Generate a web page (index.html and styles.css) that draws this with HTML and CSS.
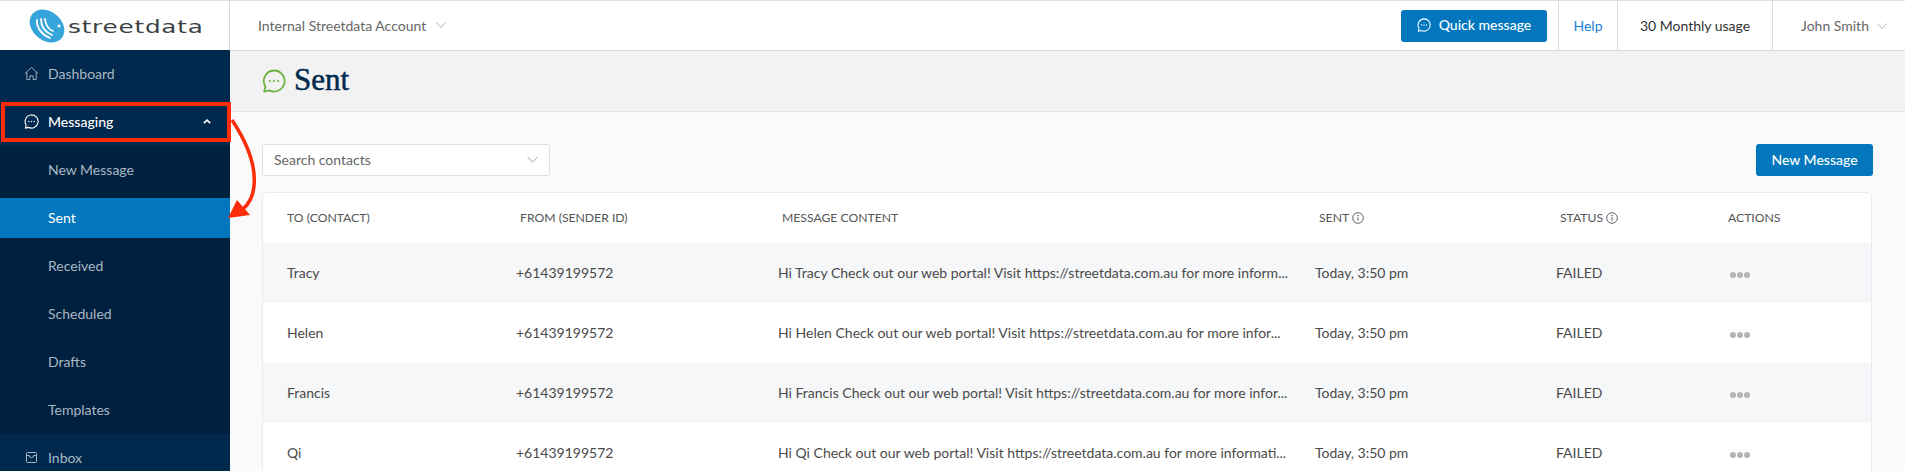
FILE: index.html
```html
<!DOCTYPE html>
<html lang="en">
<head>
    <meta charset="UTF-8">
    <meta name="viewport" content="width=device-width, initial-scale=1.0">
    <title>Sent - Streetdata</title>
    <link rel="stylesheet" href="styles.css">
</head>
<body>
    <svg class="sprites" width="0" height="0">
        <symbol id="chat" viewBox="0 0 24 24">
            <path d="M12 1.500a10.500 10.500 0 1 1-4.600 19.900L2.200 22.600l1.300-4.900A10.500 10.500 0 0 1 12 1.500z" fill="none" stroke="currentColor" stroke-width="1.800" stroke-linejoin="round"/>
            <circle cx="7.800" cy="12" r="1.100" fill="currentColor"/>
            <circle cx="12" cy="12" r="1.100" fill="currentColor"/>
            <circle cx="16.200" cy="12" r="1.100" fill="currentColor"/>
        </symbol>
        <symbol id="chevron" viewBox="0 0 10 6">
            <path d="M.5.5 5 5.500 9.500.5" fill="none" stroke="currentColor" stroke-width=".9"/>
        </symbol>
        <symbol id="info" viewBox="0 0 12 12">
            <circle cx="6" cy="6" r="5.300" fill="none" stroke="currentColor" stroke-width=".9"/>
            <path d="M6 5.300v3.400" stroke="currentColor" stroke-width="1"/>
            <circle cx="6" cy="3.500" r=".7" fill="currentColor"/>
        </symbol>
    </svg>

    <div class="app">
        <header class="topbar">
            <div class="logo">
                <svg class="logo-mark" width="36" height="36" viewBox="0 0 36 36">
                    <ellipse cx="18" cy="18" rx="19" ry="14.500" transform="rotate(40 18 18)" fill="#36a5dc"/>
                    <g fill="none" stroke="#fff" stroke-width="1.800" stroke-linecap="round">
                        <path d="M8 12c-.5 8 5 15 13 18"/>
                        <path d="M12 11c0 7 4 13 11 16"/>
                        <path d="M16 11c.5 5 3 10 8 12"/>
                    </g>
                    <circle cx="30" cy="18" r="1.500" fill="#fff"/>
                </svg>
                <span class="logo-text">streetdata</span>
            </div>
            <div class="account">
                Internal Streetdata Account
                <svg class="chevron" width="10" height="6"><use href="#chevron"/></svg>
            </div>
            <a class="btn quick-btn" href="#">
                <svg width="14" height="14"><use href="#chat"/></svg>
                Quick message
            </a>
            <a class="topbar-cell help" href="#">Help</a>
            <div class="topbar-cell usage">30 Monthly usage</div>
            <div class="topbar-cell user">
                John Smith
                <svg class="chevron" width="10" height="6"><use href="#chevron"/></svg>
            </div>
        </header>

        <div class="body-wrap">
            <nav class="sidebar">
                <a class="nav-item" href="#">
                    <span class="nav-icon">
                        <svg width="15" height="15" viewBox="0 0 16 16">
                            <path d="M1 8 8 1.500 15 8M3 6.500V14.500H6.300V10.500H9.700V14.500H13V6.500" fill="none" stroke="currentColor" stroke-width="1"/>
                        </svg>
                    </span>
                    Dashboard
                </a>
                <a class="nav-item nav-open" href="#">
                    <span class="nav-icon">
                        <svg width="15" height="15"><use href="#chat"/></svg>
                    </span>
                    Messaging
                    <svg class="nav-caret" width="8" height="5" viewBox="0 0 8 5">
                        <path d="M.8 4.200 4 1.200l3.200 3" fill="none" stroke="currentColor" stroke-width="1.600"/>
                    </svg>
                </a>
                <div class="subnav">
                    <a class="sub-item" href="#">New Message</a>
                    <a class="sub-item active" href="#">Sent</a>
                    <a class="sub-item" href="#">Received</a>
                    <a class="sub-item" href="#">Scheduled</a>
                    <a class="sub-item" href="#">Drafts</a>
                    <a class="sub-item" href="#">Templates</a>
                </div>
                <a class="nav-item" href="#">
                    <span class="nav-icon">
                        <svg width="11" height="11" viewBox="0 0 11 11">
                            <path d="M1.500.5h8a1 1 0 0 1 1 1v8a1 1 0 0 1-1 1h-8a1 1 0 0 1-1-1v-8a1 1 0 0 1 1-1zM.5 3.500h2.800a2.200 2.200 0 0 0 4.400 0h2.800" fill="none" stroke="currentColor" stroke-width="1"/>
                        </svg>
                    </span>
                    Inbox
                </a>
            </nav>

            <main class="main">
                <div class="page-title">
                    <svg class="title-icon" width="24" height="24"><use href="#chat"/></svg>
                    <h1>Sent</h1>
                </div>
                <div class="content">
                    <div class="toolbar">
                        <div class="search-select">
                            Search contacts
                            <svg class="chevron" width="11" height="7"><use href="#chevron"/></svg>
                        </div>
                        <a class="btn new-btn" href="#">New Message</a>
                    </div>
                    <div class="table-card">
                        <table class="msg-table">
                            <colgroup>
                                <col class="col-to">
                                <col class="col-from">
                                <col class="col-msg">
                                <col class="col-sent">
                                <col class="col-status">
                                <col>
                            </colgroup>
                            <thead>
                                <tr>
                                    <th>To (contact)</th>
                                    <th class="nudge">From (sender ID)</th>
                                    <th class="nudge">Message content</th>
                                    <th class="nudge">Sent <svg class="info" width="12" height="12"><use href="#info"/></svg></th>
                                    <th class="nudge">Status <svg class="info" width="12" height="12"><use href="#info"/></svg></th>
                                    <th>Actions</th>
                                </tr>
                            </thead>
                            <tbody>
                                <tr>
                                    <td>Tracy</td>
                                    <td>+61439199572</td>
                                    <td class="msg">Hi Tracy Check out our web portal! Visit https://streetdata.com.au for more inform...</td>
                                    <td>Today, 3:50 pm</td>
                                    <td>FAILED</td>
                                    <td><span class="dots"><i></i><i></i><i></i></span></td>
                                </tr>
                                <tr>
                                    <td>Helen</td>
                                    <td>+61439199572</td>
                                    <td class="msg">Hi Helen Check out our web portal! Visit https://streetdata.com.au for more infor...</td>
                                    <td>Today, 3:50 pm</td>
                                    <td>FAILED</td>
                                    <td><span class="dots"><i></i><i></i><i></i></span></td>
                                </tr>
                                <tr>
                                    <td>Francis</td>
                                    <td>+61439199572</td>
                                    <td class="msg">Hi Francis Check out our web portal! Visit https://streetdata.com.au for more infor...</td>
                                    <td>Today, 3:50 pm</td>
                                    <td>FAILED</td>
                                    <td><span class="dots"><i></i><i></i><i></i></span></td>
                                </tr>
                                <tr>
                                    <td>Qi</td>
                                    <td>+61439199572</td>
                                    <td class="msg">Hi Qi Check out our web portal! Visit https://streetdata.com.au for more informati...</td>
                                    <td>Today, 3:50 pm</td>
                                    <td>FAILED</td>
                                    <td><span class="dots"><i></i><i></i><i></i></span></td>
                                </tr>
                            </tbody>
                        </table>
                    </div>
                </div>
            </main>
        </div>
    </div>

    <!-- Red callout drawn on top of the screenshot -->
    <div class="callout-box"></div>
    <svg class="callout-arrow" width="60" height="130" viewBox="0 0 60 130">
        <path d="M4 12C20 36 28 58 26 78 25 88 21 96 15 101" fill="none" stroke="#fb2c07" stroke-width="3.500"/>
        <path d="M0 110 9 92 22 107z" fill="#fb2c07"/>
    </svg>
</body>
</html>
```

FILE: styles.css
```css
/* General Styles */
html, body {
    margin: 0;
    padding: 0;
    height: 100%;
    overflow: hidden;
}

body {
    font-family: Lato, "Open Sans", sans-serif;
    font-size: 14px;
    color: #4a4a4a;
    background: #fafafa;
}

a {
    text-decoration: none;
    color: inherit;
}

.sprites {
    display: block;
    height: 0;
}

.app {
    display: flex;
    flex-direction: column;
    height: 100%;
}

/* Top Bar */
.topbar {
    display: flex;
    align-items: stretch;
    flex: 0 0 auto;
    box-sizing: border-box;
    height: 51px;
    background: #fff;
    border-top: 1px solid #dfdfdf;
    border-bottom: 1px solid #d9d9d9;
}

.logo {
    display: flex;
    align-items: center;
    box-sizing: border-box;
    width: 230px;
    padding-left: 29px;
    border-right: 1px solid #d9d9d9;
}

.logo-mark {
    flex: 0 0 auto;
}

.logo-text {
    display: inline-block;
    margin-left: 3px;
    margin-top: 3px;
    font-family: "DejaVu Sans", sans-serif;
    font-size: 17px;
    letter-spacing: .55px;
    color: #3c3f44;
    transform: scaleX(1.45);
    transform-origin: left center;
}

.account {
    display: flex;
    align-items: center;
    flex: 1;
    padding-left: 28px;
    padding-bottom: 1px;
    color: #666;
}

.chevron {
    color: #a8a8a8;
}

.account .chevron {
    margin-left: 10px;
}

.btn {
    display: flex;
    align-items: center;
    justify-content: center;
    box-sizing: border-box;
    padding-bottom: 2px;
    color: #fff;
    background: #0277bd;
    border-radius: 3px;
    font-weight: 500;
}

.quick-btn {
    align-self: center;
    gap: 8px;
    width: 146px;
    height: 32px;
    margin-right: 11px;
}

.topbar-cell {
    display: flex;
    align-items: center;
    border-left: 1px solid #d9d9d9;
}

.help {
    width: 58px;
    justify-content: center;
    color: #1a7fd4;
}

.usage {
    width: 154px;
    justify-content: center;
    color: #333;
}

.user {
    width: 133px;
    padding-left: 28px;
    box-sizing: border-box;
    color: #666;
}

.user .chevron {
    margin-left: 8px;
}

.body-wrap {
    display: flex;
    flex: 1;
    min-height: 0;
}

/* Sidebar */
.sidebar {
    flex: 0 0 230px;
    margin-top: -1px;
    background: #00294d;
}

.nav-item {
    display: flex;
    align-items: center;
    box-sizing: border-box;
    height: 48px;
    padding: 0 0 2px 24px;
    color: #a9b7c4;
}

.nav-icon {
    display: flex;
    justify-content: center;
    flex: 0 0 15px;
    margin-right: 9px;
}

.nav-open {
    color: #fff;
    font-weight: 500;
}

.nav-caret {
    margin-left: auto;
    margin-right: 19px;
}

.subnav {
    padding: 4px 0;
    background: #00203f;
}

.sub-item {
    display: flex;
    align-items: center;
    box-sizing: border-box;
    height: 40px;
    margin-bottom: 8px;
    padding: 0 0 2px 48px;
    color: #a9b7c4;
}

.sub-item:last-child {
    margin-bottom: 0;
}

.sub-item.active {
    color: #fff;
    background: #0277bd;
}

/* Main Content */
.main {
    flex: 1;
    min-width: 0;
}

.page-title {
    display: flex;
    align-items: center;
    height: 60px;
    padding-left: 32px;
    background: #f2f2f2;
    border-bottom: 1px solid #e2e2e2;
}

.title-icon {
    margin-right: 8px;
    color: #6cb33f;
}

.page-title h1 {
    margin: 0 0 2px;
    font-family: "Liberation Serif", serif;
    font-size: 31px;
    font-weight: 400;
    color: #00294d;
    -webkit-text-stroke: .5px #00294d;
}

.content {
    padding: 32px 32px 0;
}

.toolbar {
    display: flex;
    justify-content: space-between;
    align-items: flex-start;
    margin-bottom: 16px;
}

.search-select {
    display: flex;
    align-items: center;
    justify-content: space-between;
    box-sizing: border-box;
    width: 288px;
    height: 32px;
    padding: 0 11px 2px;
    color: #666;
    background: #fff;
    border: 1px solid #ddd;
    border-radius: 3px;
}

.new-btn {
    width: 117px;
    height: 32px;
}

/* Messages Table */
.table-card {
    margin-right: 1px;
    background: #fff;
    border: 1px solid #e8ebf2;
    border-radius: 4px;
}

.msg-table {
    width: 100%;
    border-collapse: collapse;
    table-layout: fixed;
}

.col-to {
    width: 253px;
}

.col-from {
    width: 262px;
}

.col-msg {
    width: 537px;
}

.col-sent {
    width: 241px;
}

.col-status {
    width: 172px;
}

.msg-table th {
    box-sizing: border-box;
    height: 50px;
    padding: 0 0 2px 24px;
    font-size: 12.2px;
    font-weight: 400;
    text-align: left;
    text-transform: uppercase;
    color: #555;
}

.msg-table th + th {
    padding-left: 0;
}

.msg-table th.nudge {
    padding-left: 4px;
}

.info {
    vertical-align: -2px;
    color: #555;
}

.msg-table td {
    box-sizing: border-box;
    height: 60px;
    padding: 0 0 2px;
    color: #4a4a4a;
    white-space: nowrap;
}

.msg-table td:first-child {
    padding-left: 24px;
}

.msg-table tbody tr:nth-child(odd) {
    background: #f6f7f9;
}

.dots {
    display: flex;
    gap: 1px;
    padding-left: 2px;
    padding-top: 5px;
}

.dots i {
    width: 6px;
    height: 6px;
    border-radius: 50%;
    background: #b5b5b5;
}

/* Callout */
.callout-box {
    position: absolute;
    top: 102px;
    left: 1px;
    box-sizing: border-box;
    width: 230px;
    height: 40px;
    border: 4px solid #fb2c07;
}

.callout-arrow {
    position: absolute;
    top: 108px;
    left: 228px;
}
```
